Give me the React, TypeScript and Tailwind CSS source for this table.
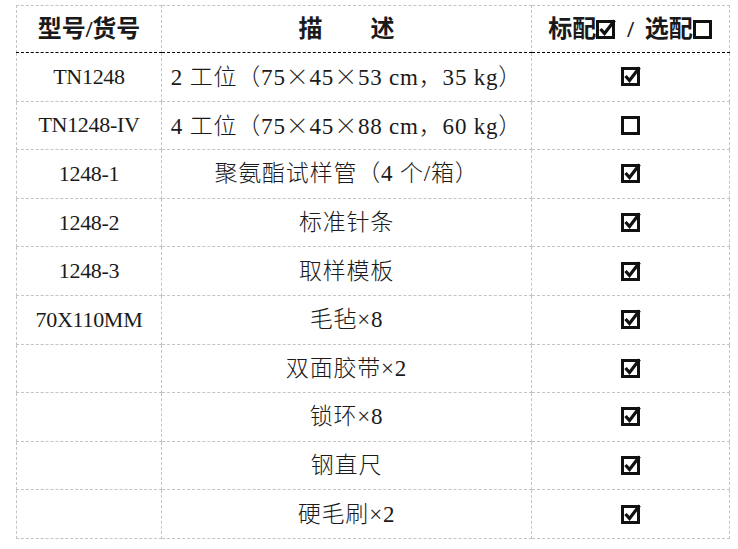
import React from 'react';

type Row = { code: string; desc: React.ReactNode; std: boolean };

// full-width multiplication sign as in the source document
const X = () => <span style={{ fontFamily: "'Noto Sans CJK SC', sans-serif" }}>×</span>;

const rows: Row[] = [
  { code: 'TN1248', desc: <>2 工位（75<X />45<X />53 cm，35 kg）</>, std: true },
  { code: 'TN1248-IV', desc: <>4 工位（75<X />45<X />88 cm，60 kg）</>, std: false },
  { code: '1248-1', desc: '聚氨酯试样管（4 个/箱）', std: true },
  { code: '1248-2', desc: '标准针条', std: true },
  { code: '1248-3', desc: '取样模板', std: true },
  { code: '70X110MM', desc: '毛毡×8', std: true },
  { code: '', desc: '双面胶带×2', std: true },
  { code: '', desc: '锁环×8', std: true },
  { code: '', desc: '钢直尺', std: true },
  { code: '', desc: '硬毛刷×2', std: true },
];

const Box: React.FC<{ checked: boolean }> = ({ checked }) => (
  <svg width="20" height="20" viewBox="0 0 20 20" className="inline-block align-[-2px]">
    <rect x="1.5" y="2.5" width="16" height="16" fill="none" stroke="#111" strokeWidth="3" />
    {checked && (
      <path d="M4.5 10 L8.5 14.5 L18.5 1.5" fill="none" stroke="#111" strokeWidth="3.2" strokeLinejoin="miter" />
    )}
  </svg>
);

const cell = 'border border-dashed border-[#c4c4c4] text-center align-middle';
const head = `${cell} border-b-black border-b-dotted font-bold text-[24px]`;

export default function App() {
  return (
    <div
      className="bg-white w-[738px] h-[549px] pt-[5px] pl-[16px]"
      style={{ fontFamily: "'Liberation Serif', 'Noto Sans CJK SC', serif" }}
    >
      <table className="border-collapse w-[713px] table-fixed text-[#1a1a1a] text-[23px] leading-none font-light">
        <colgroup>
          <col className="w-[145px]" />
          <col className="w-[370px]" />
          <col className="w-[198px]" />
        </colgroup>
        <thead>
          <tr className="h-[47px]">
            <th className={head}>型号/货号</th>
            <th className={head}>描　　述</th>
            <th className={head}>
              标配<Box checked /><span className="mx-[11px]">/</span>选配<Box checked={false} />
            </th>
          </tr>
        </thead>
        <tbody>
          {rows.map((r, i) => (
            <tr key={i} className="h-[48.6px]">
              <td className={`${cell} text-[22px] tracking-[-0.3px]`}>{r.code}</td>
              <td className={`${cell} tracking-[0.8px]`}>{r.desc}</td>
              <td className={cell}>
                <Box checked={r.std} />
              </td>
            </tr>
          ))}
        </tbody>
      </table>
    </div>
  );
}
